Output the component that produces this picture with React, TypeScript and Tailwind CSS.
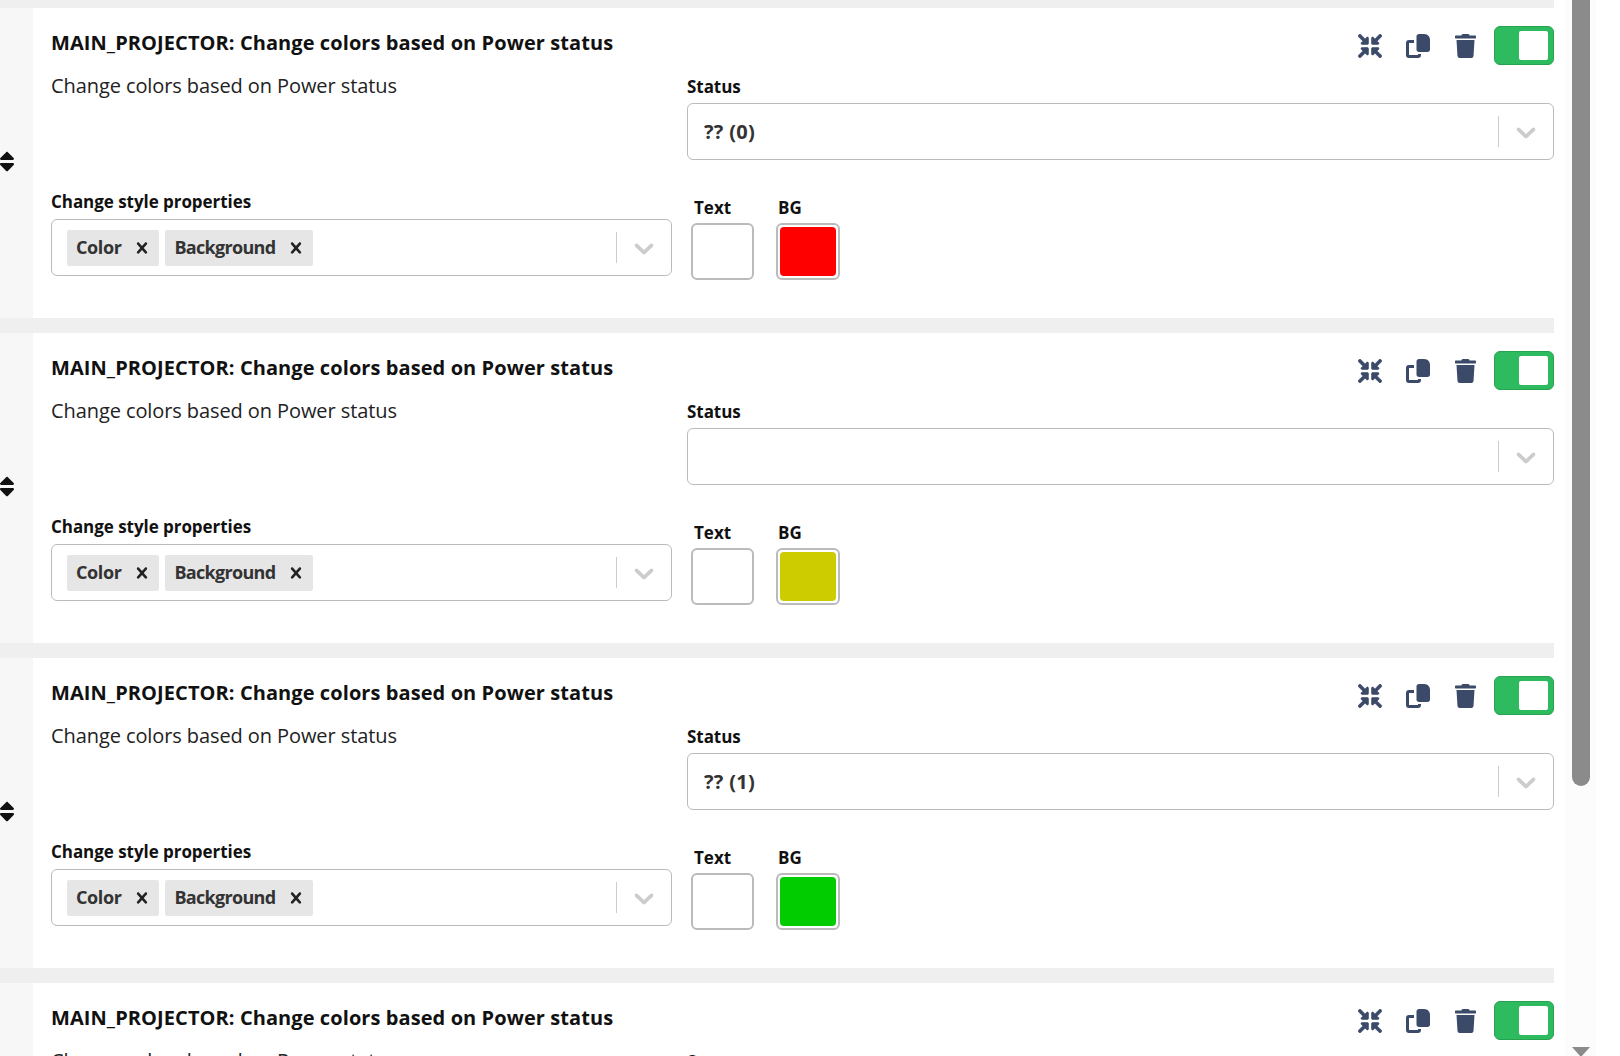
import { FaCompressArrowsAlt, FaSort, FaTrash } from 'react-icons/fa';

const cards = [
  { status: '?? (0)', bg: 'bg-[#ff0000]' },
  { status: '', bg: 'bg-[#cccc00]' },
  { status: '?? (1)', bg: 'bg-[#00cc00]' },
  { status: '', bg: 'bg-[#cccc00]' },
];

const Chevron = () => (
  <div className="flex items-center self-stretch py-[12px]">
    <span className="w-px self-stretch bg-[#cccccc]" />
    <svg viewBox="0 0 20 20" className="mx-[11px] h-[32px] w-[32px] fill-[#cccccc]">
      <path d="M4.516 7.548c0.436-0.446 1.043-0.481 1.576 0l3.908 3.747 3.908-3.747c0.533-0.481 1.141-0.446 1.574 0 0.436 0.445 0.408 1.197 0 1.615-0.406 0.418-4.695 4.502-4.695 4.502-0.217 0.223-0.502 0.335-0.787 0.335s-0.57-0.112-0.789-0.335c0 0-4.287-4.084-4.695-4.502s-0.436-1.17 0-1.615z" />
    </svg>
  </div>
);

const Chip = ({ label, tracking }: { label: string; tracking: string }) => (
  <div className={`flex h-[36px] items-center rounded-[2px] bg-[#e6e6e6] pl-[9px] pr-[6px] text-[18px] font-bold text-[#333333] ${tracking}`}>
    {label}
    <svg viewBox="0 0 20 20" className="ml-[10px] h-[22px] w-[22px] fill-[#222222]">
      <path d="M14.348 14.849c-0.469 0.469-1.229 0.469-1.697 0l-2.651-3.030-2.651 3.029c-0.469 0.469-1.229 0.469-1.697 0-0.469-0.469-0.469-1.229 0-1.697l2.758-3.15-2.759-3.152c-0.469-0.469-0.469-1.228 0-1.697s1.228-0.469 1.697 0l2.652 3.031 2.651-3.031c0.469-0.469 1.228-0.469 1.697 0s0.469 1.229 0 1.697l-2.758 3.152 2.758 3.15c0.469 0.469 0.469 1.229 0 1.698z" />
    </svg>
  </div>
);

const Card = ({ status, bg }: { status: string; bg: string }) => (
  <div className="flex h-[310px] bg-white">
    <div className="flex w-[33px] shrink-0 items-center bg-[#f7f7f7] pb-[4px]">
      <FaSort className="-ml-px h-[25px] w-[16px] text-[#111111]" />
    </div>
    <div className="flex-1 pl-[18px]">
      <div className="flex h-[64px] items-start justify-between">
        <h3 className="pt-[21px] text-[20px] font-bold leading-[28px] tracking-[0.08px] text-[#111111]">
          MAIN_PROJECTOR: Change colors based on Power status
        </h3>
        <div className="flex items-center pt-[18px]">
          <FaCompressArrowsAlt className="h-[24px] w-[24px] text-[#3b4a68] [stroke-width:12px]" />
          <svg viewBox="0 0 24 24" className="ml-[24px] h-[24px] w-[24px] fill-[#3b4a68]">
            <path d="M13 0h5c4 0 6 3 6 6v9.500c0 1.500-1 2.500-2.500 2.500H13c-1.500 0-2.500-1-2.500-2.500v-13C10.500 1 11.500 0 13 0z" />
            <path d="M8 6H3C1 6 0 7 0 9v12c0 2 1 3 3 3h9c2 0 3-1 3-3v-1h-3v1H3V9h5z" />
          </svg>
          <FaTrash className="ml-[25px] h-[24px] w-[21px] text-[#3b4a68]" />
          <div className="ml-[18px] flex h-[39px] w-[60px] items-center justify-end rounded-[6px] border border-[#27a350] bg-[#2eba5e] pr-[5px]">
            <div className="h-[29px] w-[29px] rounded-[2px] bg-white" />
          </div>
        </div>
      </div>
      <div className="flex gap-[16px]">
        <div className="w-[620px] shrink-0 text-[20px] leading-[28px] tracking-[-0.09px] text-[#222222]">
          Change colors based on Power status
        </div>
        <div className="flex-1 pt-[3px]">
          <div className="text-[17px] font-bold leading-[24px] tracking-[-0.05px] text-[#111111]">Status</div>
          <div className="mt-[4px] flex h-[57px] items-center rounded-[6px] border border-[#bbbbbb] pl-[16px]">
            <div className="flex-1 text-[20px] font-bold tracking-[0.3px] text-[#333333]">{status}</div>
            <Chevron />
          </div>
        </div>
      </div>
      <div className="mt-[30px] flex">
        <div className="w-[621px] shrink-0">
          <div className="text-[17px] font-bold leading-[24px] tracking-[-0.05px] text-[#111111]">Change style properties</div>
          <div className="mt-[5px] flex h-[57px] items-center rounded-[6px] border border-[#bbbbbb] pl-[15px]">
            <div className="flex flex-1 gap-[6px]">
              <Chip label="Color" tracking="tracking-[-0.4px]" />
              <Chip label="Background" tracking="tracking-[-0.7px]" />
            </div>
            <Chevron />
          </div>
        </div>
        <div className="ml-[19px] mt-[6px] w-[63px]">
          <div className="pl-[3px] text-[17px] font-bold leading-[24px] text-[#111111]">Text</div>
          <div className="mt-[3px] h-[57px] rounded-[6px] border-2 border-[#bbbbbb] bg-white" />
        </div>
        <div className="ml-[22px] mt-[6px] w-[64px]">
          <div className="pl-[2px] text-[17px] font-bold leading-[24px] text-[#111111]">BG</div>
          <div className="mt-[3px] h-[57px] rounded-[6px] border-2 border-[#bbbbbb] bg-white p-[2px]">
            <div className={`h-full w-full rounded-[4px] ${bg}`} />
          </div>
        </div>
      </div>
    </div>
  </div>
);

export default function App() {
  return (
    <div className="flex h-[1056px] overflow-hidden bg-white font-['Open_Sans',sans-serif]">
      <div className="w-[1554px] shrink-0">
        <div className="h-[8px] bg-[#efefef]" />
        {cards.map((card, i) => (
          <div key={i}>
            <Card status={card.status} bg={card.bg} />
            <div className="h-[15px] bg-[#efefef]" />
          </div>
        ))}
      </div>
      <div className="ml-[12px] flex w-[30px] flex-col justify-between bg-[#fcfcfc] pl-[6px]">
        <div className="h-[786px] w-[18px] rounded-b-[9px] bg-[#8b8b8b]" />
        <div className="mb-[-1px] h-0 w-0 border-x-[9px] border-t-[10px] border-x-transparent border-t-[#8b8b8b]" />
      </div>
    </div>
  );
}
